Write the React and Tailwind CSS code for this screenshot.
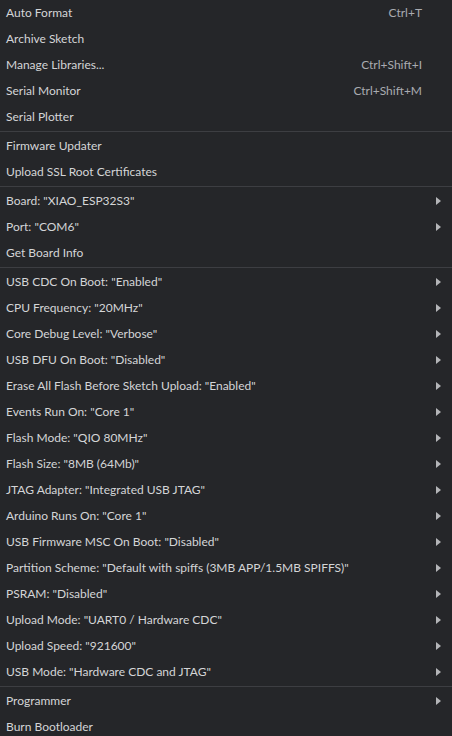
import React from "react";

const sections = [
  [
    { label: "Auto Format", shortcut: "Ctrl+T" },
    { label: "Archive Sketch" },
    { label: "Manage Libraries...", shortcut: "Ctrl+Shift+I" },
    { label: "Serial Monitor", shortcut: "Ctrl+Shift+M" },
    { label: "Serial Plotter" },
  ],
  [{ label: "Firmware Updater" }, { label: "Upload SSL Root Certificates" }],
  [
    { label: 'Board: "XIAO_ESP32S3"', sub: true },
    { label: 'Port: "COM6"', sub: true },
    { label: "Get Board Info" },
  ],
  [
    { label: 'USB CDC On Boot: "Enabled"', sub: true },
    { label: 'CPU Frequency: "20MHz"', sub: true },
    { label: 'Core Debug Level: "Verbose"', sub: true },
    { label: 'USB DFU On Boot: "Disabled"', sub: true },
    { label: 'Erase All Flash Before Sketch Upload: "Enabled"', sub: true },
    { label: 'Events Run On: "Core 1"', sub: true },
    { label: 'Flash Mode: "QIO 80MHz"', sub: true },
    { label: 'Flash Size: "8MB (64Mb)"', sub: true },
    { label: 'JTAG Adapter: "Integrated USB JTAG"', sub: true },
    { label: 'Arduino Runs On: "Core 1"', sub: true },
    { label: 'USB Firmware MSC On Boot: "Disabled"', sub: true },
    { label: 'Partition Scheme: "Default with spiffs (3MB APP/1.5MB SPIFFS)"', sub: true },
    { label: 'PSRAM: "Disabled"', sub: true },
    { label: 'Upload Mode: "UART0 / Hardware CDC"', sub: true },
    { label: 'Upload Speed: "921600"', sub: true },
    { label: 'USB Mode: "Hardware CDC and JTAG"', sub: true },
  ],
  [{ label: "Programmer", sub: true }, { label: "Burn Bootloader" }],
];

function Arrow() {
  return (
    <svg width="5" height="8" viewBox="0 0 5 8" className="block">
      <path d="M0 0 L5 4 L0 8 Z" fill="#b4b5b8" />
    </svg>
  );
}

function Row({ item }) {
  return (
    <div className="flex h-[26px] items-center pl-[6px] pr-[11px]">
      <span className="flex-1 whitespace-nowrap text-[12px] text-[#d4d5d7]">{item.label}</span>
      {item.shortcut && (
        <span className="mr-[19px] whitespace-nowrap text-[12px] text-[#a9abb0]">{item.shortcut}</span>
      )}
      {item.sub && <Arrow />}
    </div>
  );
}

export default function App() {
  return (
    <div
      className="h-[736px] w-[452px] overflow-hidden bg-[#252629]"
      style={{ fontFamily: 'Lato, "Noto Sans", sans-serif' }}
    >
      {sections.map((sec, i) => (
        <div key={i}>
          {i > 0 && (
            <div className="py-[1px]">
              <div className="h-px bg-[#3d3e42]" />
            </div>
          )}
          {sec.map((item, j) => (
            <Row key={j} item={item} />
          ))}
        </div>
      ))}
    </div>
  );
}
